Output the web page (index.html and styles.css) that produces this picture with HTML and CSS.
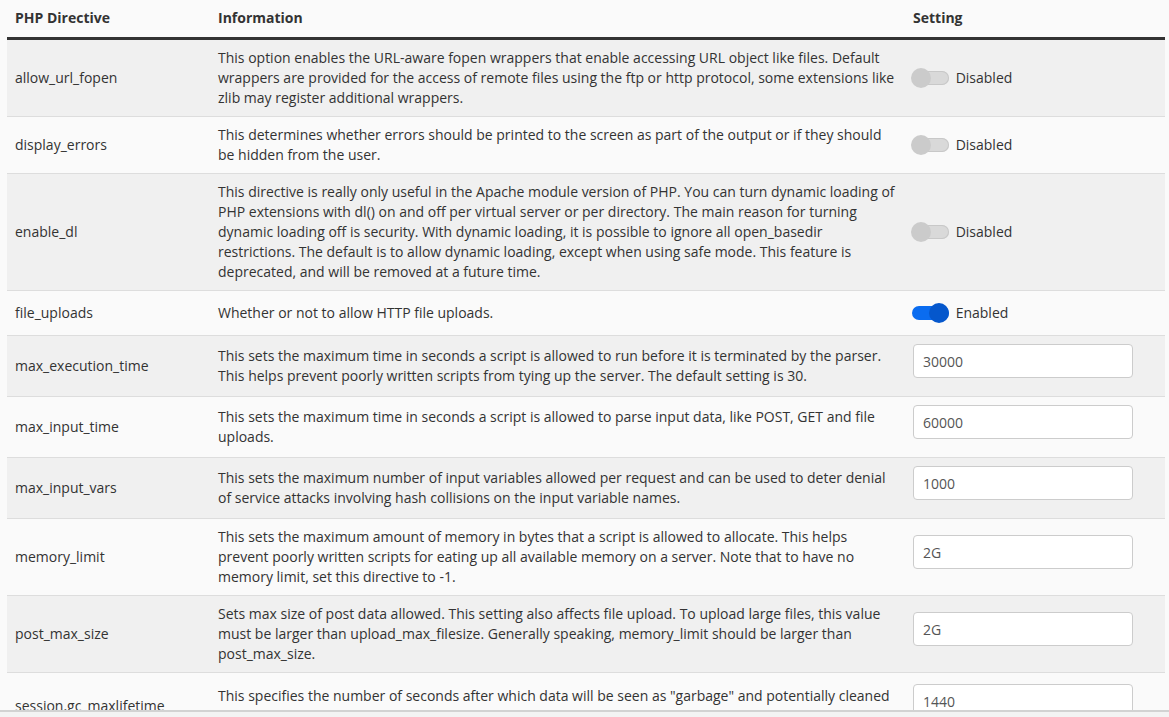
FILE: index.html
```html
<!DOCTYPE html>
<html lang="en">
  <head>
    <meta charset="UTF-8" />
    <meta name="viewport" content="width=device-width, initial-scale=1.0" />
    <title>PHP Options</title>
    <link rel="stylesheet" href="styles.css">
  </head>
  <body>
    <div class="panel">
      <table class="directives">
        <colgroup>
          <col class="col-name" />
          <col class="col-info" />
          <col class="col-setting" />
        </colgroup>
        <thead>
          <tr>
            <th>PHP Directive</th>
            <th>Information</th>
            <th>Setting</th>
          </tr>
        </thead>
        <tbody>
          <tr>
            <td>allow_url_fopen</td>
            <td>This option enables the URL-aware fopen wrappers that enable accessing URL object like files. Default wrappers are provided for the access of remote files using the ftp or http protocol, some extensions like zlib may register additional wrappers.</td>
            <td>
              <label class="switch"><span class="track"></span><span class="knob"></span></label>
              <span class="switch-label">Disabled</span>
            </td>
          </tr>
          <tr>
            <td>display_errors</td>
            <td>This determines whether errors should be printed to the screen as part of the output or if they should be hidden from the user.</td>
            <td>
              <label class="switch"><span class="track"></span><span class="knob"></span></label>
              <span class="switch-label">Disabled</span>
            </td>
          </tr>
          <tr>
            <td>enable_dl</td>
            <td>This directive is really only useful in the Apache module version of PHP. You can turn dynamic loading of PHP extensions with dl() on and off per virtual server or per directory. The main reason for turning dynamic loading off is security. With dynamic loading, it is possible to ignore all open_basedir restrictions. The default is to allow dynamic loading, except when using safe mode. This feature is deprecated, and will be removed at a future time.</td>
            <td>
              <label class="switch"><span class="track"></span><span class="knob"></span></label>
              <span class="switch-label">Disabled</span>
            </td>
          </tr>
          <tr>
            <td>file_uploads</td>
            <td>Whether or not to allow HTTP file uploads.</td>
            <td>
              <label class="switch on"><span class="track"></span><span class="knob"></span></label>
              <span class="switch-label">Enabled</span>
            </td>
          </tr>
          <tr>
            <td>max_execution_time</td>
            <td>This sets the maximum time in seconds a script is allowed to run before it is terminated by the parser. This helps prevent poorly written scripts from tying up the server. The default setting is 30.</td>
            <td><input class="field" type="text" value="30000" /></td>
          </tr>
          <tr>
            <td>max_input_time</td>
            <td>This sets the maximum time in seconds a script is allowed to parse input data, like POST, GET and file uploads.</td>
            <td><input class="field" type="text" value="60000" /></td>
          </tr>
          <tr>
            <td>max_input_vars</td>
            <td>This sets the maximum number of input variables allowed per request and can be used to deter denial of service attacks involving hash collisions on the input variable names.</td>
            <td><input class="field" type="text" value="1000" /></td>
          </tr>
          <tr>
            <td>memory_limit</td>
            <td>This sets the maximum amount of memory in bytes that a script is allowed to allocate. This helps prevent poorly written scripts for eating up all available memory on a server. Note that to have no memory limit, set this directive to -1.</td>
            <td><input class="field" type="text" value="2G" /></td>
          </tr>
          <tr>
            <td>post_max_size</td>
            <td>Sets max size of post data allowed. This setting also affects file upload. To upload large files, this value must be larger than upload_max_filesize. Generally speaking, memory_limit should be larger than post_max_size.</td>
            <td><input class="field" type="text" value="2G" /></td>
          </tr>
          <tr class="last">
            <td>session.gc_maxlifetime</td>
            <td>This specifies the number of seconds after which data will be seen as "garbage" and potentially cleaned up.</td>
            <td><input class="field" type="text" value="1440" /></td>
          </tr>
        </tbody>
      </table>
    </div>
  </body>
</html>
```

FILE: styles.css
```css
body {
  margin: 0;
  background-color: #f3f3f3;
  font-family: "Open Sans", "Liberation Sans", sans-serif;
  font-size: 14px;
  line-height: 20px;
  color: #333;
}
.panel {
  height: 710px;
  overflow: hidden;
  padding: 0 4px 0 7px;
  background-color: #fafafa;
  border-bottom: 2px solid #d2d2d2;
}
.directives {
  width: 100%;
  table-layout: fixed;
  border-collapse: collapse;
}
.col-name {
  width: 203px;
}
.col-setting {
  width: 260px;
}
.directives th {
  text-align: left;
  font-weight: bold;
  padding: 8px 8px 9px;
  border-bottom: 3px solid #333;
}
.directives td {
  padding: 8px;
  vertical-align: middle;
  border-bottom: 1px solid #ddd;
}
.directives tbody tr:nth-child(odd) {
  background-color: #f0f0f0;
}
.directives tr.last td {
  padding-top: 11px;
}
.switch {
  position: relative;
  display: inline-block;
  vertical-align: middle;
  width: 38px;
  height: 28px;
  margin-left: -2px;
}
.track {
  position: absolute;
  left: 1px;
  right: 0;
  top: 7px;
  height: 14px;
  border-radius: 7px;
  background-color: #d9d9d9;
  box-shadow: inset 0 0 0 1px #c8c8c8;
}
.knob {
  position: absolute;
  left: 0;
  top: 4px;
  width: 20px;
  height: 20px;
  border-radius: 50%;
  background-color: #cbcbcb;
}
.switch.on .track {
  background-color: #0a6cf0;
  box-shadow: none;
}
.switch.on .knob {
  left: auto;
  right: 0;
  background-color: #0557cc;
}
.switch-label {
  vertical-align: middle;
  margin-left: 3px;
}
.field {
  display: block;
  box-sizing: border-box;
  width: 220px;
  height: 34px;
  margin-bottom: 10px;
  padding: 6px 9px;
  border: 1px solid #ccc;
  border-radius: 4px;
  background-color: #fff;
  font-family: inherit;
  font-size: 14px;
  color: #555;
}
```
